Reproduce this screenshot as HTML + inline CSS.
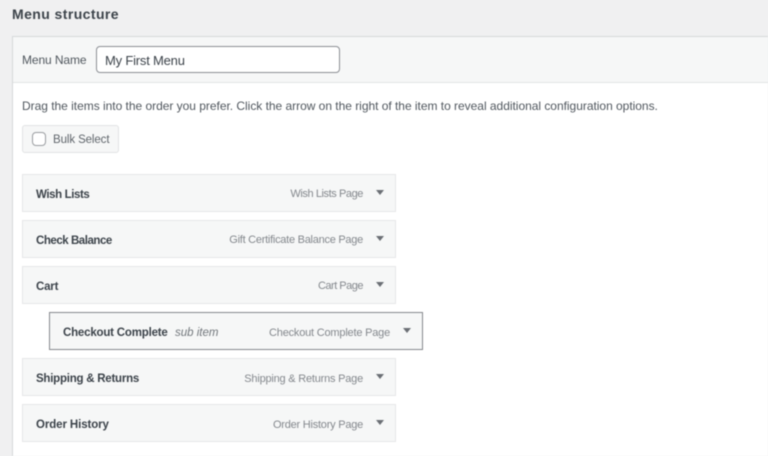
<!DOCTYPE html>
<html lang="en">
<head>
<meta charset="utf-8">
<title>Menu structure</title>
<style>
html,body{margin:0;padding:0;width:768px;height:456px;overflow:hidden;background:#f0f0f1;}
#w{position:absolute;left:0;top:0;width:768px;height:456px;overflow:hidden;font-family:"Liberation Sans",sans-serif;color:#50575e;font-size:12px;filter:blur(.5px);}
#w div{position:absolute;box-sizing:border-box;white-space:nowrap;}
.panel{left:12px;top:36px;width:770px;height:440px;background:#fff;border:1px solid #d6d8da;}
.head{left:13px;top:37px;width:755px;height:46px;background:#f6f7f7;border-bottom:1px solid #e2e4e5;}
.item{left:22px;width:374px;height:38px;background:#f6f7f7;border:1px solid #e6e7e8;}
.sub{left:49px;border:1px solid #85888d;}
.t{left:13px;top:12px;font-weight:bold;font-size:11.5px;line-height:16px;color:#3c434a;}
.p{right:32px;top:11px;font-size:11px;line-height:16px;color:#84888d;}
.l{top:12px;}
.a{right:11px;top:15px;width:0;height:0;border-left:4px solid transparent;border-right:4px solid transparent;border-top:5.5px solid #6b6f75;}
</style>
</head>
<body>
<div id="w">
<div style="left:12px;top:5px;font-size:14px;line-height:18px;font-weight:bold;color:#3c434a;letter-spacing:.42px;">Menu structure</div>
<div class="panel"></div>
<div class="head"></div>
<div style="left:22px;top:52px;font-size:12px;line-height:16px;letter-spacing:-.1px;">Menu Name</div>
<div style="left:96px;top:46px;width:244px;height:27px;background:#fff;border:1px solid #8c8f94;border-radius:4px;"></div>
<div style="left:105px;top:52px;font-size:13px;line-height:17px;letter-spacing:-.2px;color:#3c434a;">My First Menu</div>
<div style="left:22px;top:98px;font-size:12px;line-height:16px;letter-spacing:-.025px;">Drag the items into the order you prefer. Click the arrow on the right of the item to reveal additional configuration options.</div>
<div style="left:22px;top:125px;width:97px;height:28px;background:#f6f7f7;border:1px solid #e2e3e4;border-radius:3px;"></div>
<div style="left:32px;top:132px;width:14px;height:14px;background:#fff;border:1px solid #9a9da1;border-radius:4px;"></div>
<div style="left:53px;top:132px;font-size:11.5px;line-height:16px;letter-spacing:-.1px;color:#5f656b;">Bulk Select</div>

<div class="item" style="top:174px;"><div class="t" style="letter-spacing:-.4px;">Wish Lists</div><div class="p" style="letter-spacing:-.42px;">Wish Lists Page</div><div class="a"></div></div>
<div class="item" style="top:220px;"><div class="t" style="letter-spacing:-.46px;">Check Balance</div><div class="p" style="letter-spacing:-.26px;">Gift Certificate Balance Page</div><div class="a"></div></div>
<div class="item" style="top:266px;"><div class="t" style="letter-spacing:-.2px;">Cart</div><div class="p" style="letter-spacing:-.5px;">Cart Page</div><div class="a"></div></div>
<div class="item sub" style="top:312px;"><div class="t" style="letter-spacing:-.2px;">Checkout Complete</div><div style="left:125px;top:12px;font-size:11.5px;line-height:16px;font-style:italic;color:#72777c;">sub item</div><div class="p l" style="letter-spacing:-.2px;">Checkout Complete Page</div><div class="a"></div></div>
<div class="item" style="top:358px;"><div class="t" style="letter-spacing:-.24px;">Shipping &amp; Returns</div><div class="p l" style="letter-spacing:-.21px;">Shipping &amp; Returns Page</div><div class="a"></div></div>
<div class="item" style="top:404px;"><div class="t" style="letter-spacing:-.1px;">Order History</div><div class="p l" style="letter-spacing:-.23px;">Order History Page</div><div class="a"></div></div>
</div>
</body>
</html>
